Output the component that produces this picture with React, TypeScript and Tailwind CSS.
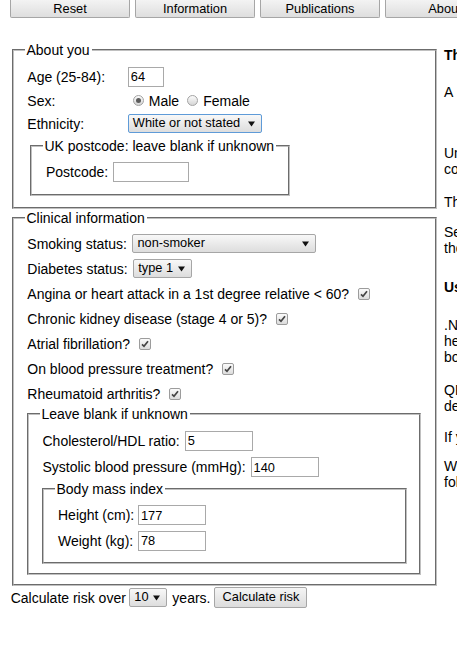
import React from "react";

const FIELDSET =
  "border-2 [border-style:groove] border-[#c0c0c0] min-w-0 ";

function Fieldset({
  legend,
  className,
  children,
}: {
  legend: string;
  className: string;
  children: React.ReactNode;
}) {
  return (
    <fieldset className={FIELDSET + className}>
      <legend className="px-[2px] leading-[16px]">{legend}</legend>
      {children}
    </fieldset>
  );
}

function Arrow() {
  return (
    <svg width="7" height="6" viewBox="0 0 7 6" className="shrink-0">
      <path d="M0 0.5H7L3.5 5.5Z" fill="#111" />
    </svg>
  );
}

function Select({
  text,
  className,
  focused,
}: {
  text: string;
  className: string;
  focused?: boolean;
}) {
  return (
    <span
      className={
        "inline-flex h-[19px] shrink-0 items-center justify-between rounded-[2px] border bg-linear-to-b from-[#f8f8f8] to-[#dddddd] pl-[4px] pr-[6px] text-[12.8px] leading-none text-black " +
        (focused ? "border-[#5e9bd8] " : "border-[#a6a6a6] ") +
        className
      }
    >
      <span>{text}</span>
      <Arrow />
    </span>
  );
}

function Check({ className }: { className: string }) {
  return (
    <span
      className={
        "inline-flex h-[12px] w-[12px] shrink-0 items-center justify-center rounded-[2px] border border-[#9c9c9c] bg-linear-to-b from-[#fbfbfb] to-[#dcdcdc] " +
        className
      }
    >
      <svg width="8" height="8" viewBox="0 0 8 8">
        <path
          d="M1 4.3L3 6.3L7 1.2"
          fill="none"
          stroke="#444"
          strokeWidth="1.7"
        />
      </svg>
    </span>
  );
}

function Radio({ checked, className }: { checked?: boolean; className: string }) {
  return (
    <span
      className={
        "inline-flex h-[11px] w-[11px] shrink-0 items-center justify-center rounded-full border border-[#a3a3a3] bg-linear-to-b from-[#fbfbfb] to-[#d6d6d6] " +
        className
      }
    >
      {checked && <span className="h-[5px] w-[5px] rounded-full bg-[#5c5c5c]" />}
    </span>
  );
}

function TextBox({ value, className }: { value: string; className: string }) {
  return (
    <input
      readOnly
      value={value}
      className={
        "h-[20px] shrink-0 border border-[#a9a9a9] bg-white px-[2px] text-[12.8px] leading-none text-black outline-none " +
        className
      }
    />
  );
}

const topButtons = ["Reset", "Information", "Publications", "About"];

const sideText: { lines: string[]; bold?: boolean; mt: string }[] = [
  { lines: ["The QRISK®3-2018 risk calculator"], bold: true, mt: "mt-0" },
  { lines: ["A  new version of the calculator is available for use."], mt: "mt-[21px]" },
  {
    lines: [
      "Unless the values are known the calculator will use",
      "computed averages for cholesterol, blood pressure and BMI.",
    ],
    mt: "mt-[45px]",
  },
  { lines: ["The score estimates the risk over the chosen period."], mt: "mt-[17px]" },
  {
    lines: [
      "Select the options that apply to the patient and press",
      "the button to calculate the risk.",
    ],
    mt: "mt-[14px]",
  },
  { lines: ["Using the calculator"], bold: true, mt: "mt-[23px]" },
  {
    lines: [
      ".NET and other implementations of the algorithm and the",
      "heart age calculator are listed on the publications page,",
      "both for research and for clinical software.",
    ],
    mt: "mt-[22px]",
  },
  {
    lines: [
      "QRISK®3 is updated regularly as new data become",
      "developed and validated in the population.",
    ],
    mt: "mt-[17px]",
  },
  { lines: ["If you have any questions, please contact us."], mt: "mt-[15px]" },
  {
    lines: [
      "We would like to thank the practices that contributed the",
      "following data to the research.",
    ],
    mt: "mt-[13px]",
  },
];

export default function App() {
  return (
    <div className="h-[659px] w-[457px] overflow-hidden bg-white font-['Liberation_Sans',Arial,sans-serif] text-[14px] leading-[16px] text-black">
      {/* navigation buttons */}
      <div className="flex gap-[5px] pl-[10px]">
        {topButtons.map((t) => (
          <div
            key={t}
            className="h-[18px] w-[120px] shrink-0 rounded-b-[2px] border border-t-0 border-[#a6a6a6] bg-linear-to-b from-[#f3f3f3] to-[#dedede] text-center text-[12.8px] leading-[17px]"
          >
            {t}
          </div>
        ))}
      </div>

      <div className="mt-[24px] flex pl-[10px]">
        {/* form column */}
        <div className="w-[429px] shrink-0">
          <Fieldset legend="About you" className="mx-[2px] px-[10.5px] pt-[5px] pb-[11px]">
            <div className="pl-[2px]">
              <div className="grid grid-cols-[100.5px_1fr] pl-[0.8px]">
                <div className="flex h-[27px] items-center">Age (25-84):</div>
                <div className="flex h-[27px] items-center">
                  <TextBox value="64" className="w-[36px]" />
                </div>
                <div className="flex h-[21px] items-center">Sex:</div>
                <div className="flex h-[21px] items-center">
                  <Radio checked className="ml-[5px]" />
                  <span className="ml-[5px]">Male</span>
                  <Radio className="ml-[8px]" />
                  <span className="ml-[5px]">Female</span>
                </div>
                <div className="flex h-[25px] items-center">Ethnicity:</div>
                <div className="flex h-[25px] items-center">
                  <Select text="White or not stated" focused className="w-[134px]" />
                </div>
              </div>
              <Fieldset
                legend="UK postcode: leave blank if unknown"
                className="mt-[2px] ml-[3.5px] w-[260px] px-[10.5px] pt-[5px] pb-[10px]"
              >
                <div className="flex h-[25px] items-center pl-[3.5px]">
                  <span className="w-[67px] shrink-0">Postcode:</span>
                  <TextBox value="" className="w-[76px]" />
                </div>
              </Fieldset>
            </div>
          </Fieldset>

          <Fieldset
            legend="Clinical information"
            className="mx-[2px] mt-[1px] px-[10.5px] pt-[5px] pb-[9px]"
          >
            <div className="pl-[2px]">
              <div className="pl-[0.8px]">
                <div className="flex h-[25px] items-center">
                  Smoking status:
                  <Select text="non-smoker" className="ml-[5.5px] w-[184px]" />
                </div>
                <div className="flex h-[25px] items-center">
                  Diabetes status:
                  <Select text="type 1" className="ml-[5.5px] w-[59px]" />
                </div>
                <div className="flex h-[25px] items-center">
                  Angina or heart attack in a 1st degree relative &lt; 60?
                  <Check className="ml-[9px]" />
                </div>
                <div className="flex h-[25px] items-center">
                  Chronic kidney disease (stage 4 or 5)?
                  <Check className="ml-[9px]" />
                </div>
                <div className="flex h-[25px] items-center">
                  Atrial fibrillation?
                  <Check className="ml-[9px]" />
                </div>
                <div className="flex h-[25px] items-center">
                  On blood pressure treatment?
                  <Check className="ml-[9px]" />
                </div>
                <div className="flex h-[25px] items-center">
                  Rheumatoid arthritis?
                  <Check className="ml-[9px]" />
                </div>
              </div>

              <Fieldset
                legend="Leave blank if unknown"
                className="ml-[0.5px] w-[394px] px-[10.5px] pt-[5px] pb-[9px]"
              >
                <div className="flex h-[27px] items-center pl-[3px]">
                  Cholesterol/HDL ratio:
                  <TextBox value="5" className="ml-[5px] w-[68px]" />
                </div>
                <div className="flex h-[26px] items-center pl-[3px]">
                  Systolic blood pressure (mmHg):
                  <TextBox value="140" className="ml-[5px] w-[68px]" />
                </div>
                <Fieldset
                  legend="Body mass index"
                  className="mt-[1px] ml-[2.5px] w-[365px] px-[10.5px] pt-[5px] pb-[9px]"
                >
                  <div className="grid grid-cols-[80px_1fr] pl-[3.5px]">
                    <div className="flex h-[26px] items-center">Height (cm):</div>
                    <div className="flex h-[26px] items-center">
                      <TextBox value="177" className="w-[68px]" />
                    </div>
                    <div className="flex h-[25px] items-center">Weight (kg):</div>
                    <div className="flex h-[25px] items-center">
                      <TextBox value="78" className="w-[68px]" />
                    </div>
                  </div>
                </Fieldset>
              </Fieldset>
            </div>
          </Fieldset>

          <div className="flex h-[23px] items-center pl-[0.7px]">
            Calculate risk over
            <Select text="10" className="ml-[3.5px] w-[38px]" />
            <span className="ml-[5px]">years.</span>
            <span className="ml-[4px] flex h-[21px] w-[93px] shrink-0 items-center justify-center rounded-[2px] border border-[#a6a6a6] bg-linear-to-b from-[#f5f5f5] to-[#dcdcdc] text-[12.8px] leading-none">
              Calculate risk
            </span>
          </div>
        </div>

        {/* information column */}
        <div className="ml-[5px] w-[440px] shrink-0 pt-[5px]">
          {sideText.map((b, i) => (
            <div key={i} className={b.mt + (b.bold ? " font-bold" : "")}>
              {b.lines.map((l, j) => (
                <div key={j} className="whitespace-pre">
                  {l}
                </div>
              ))}
            </div>
          ))}
        </div>
      </div>
    </div>
  );
}
